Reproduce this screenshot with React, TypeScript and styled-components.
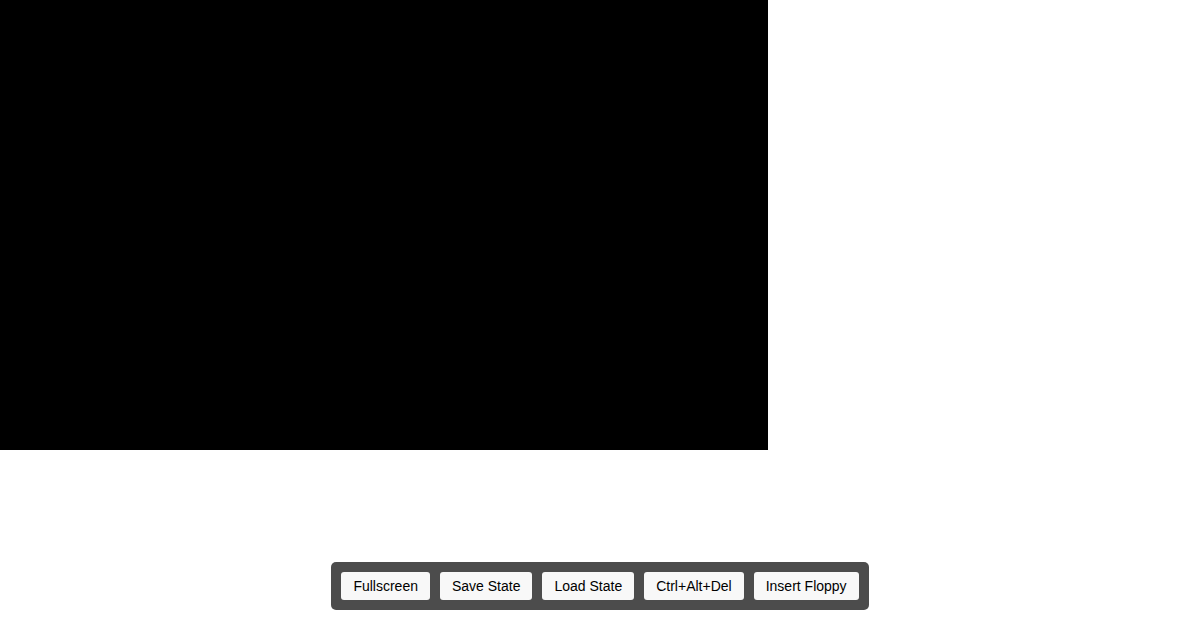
import React from "react";
import styled, { createGlobalStyle } from "styled-components";

const Global = createGlobalStyle`
  html, body { margin: 0; padding: 0; background: #ffffff; }
  body { font-family: "Liberation Sans", Arial, sans-serif; }
`;

const Page = styled.div`
  display: flex;
  flex-direction: column;
  height: 100vh;
  overflow: hidden;
`;

const Screen = styled.div`
  width: 768px;
  height: 450px;
  background: #000000;
  flex-shrink: 0;
`;

const Spacer = styled.div`
  flex: 1;
`;

const Toolbar = styled.div`
  align-self: center;
  display: flex;
  gap: 10px;
  padding: 10px;
  margin-bottom: 20px;
  background: rgba(0, 0, 0, 0.7);
  border-radius: 5px;
`;

const Button = styled.button`
  font-family: "Liberation Sans", Arial, sans-serif;
  font-size: 14px;
  line-height: 16px;
  color: #000;
  background: #f8f8f8;
  border: none;
  border-radius: 3px;
  padding: 6px 12px;
  cursor: pointer;
`;

const labels = ["Fullscreen", "Save State", "Load State", "Ctrl+Alt+Del", "Insert Floppy"];

export default function App() {
  return (
    <>
      <Global />
      <Page>
        <Screen />
        <Spacer />
        <Toolbar>
          {labels.map((l) => (
            <Button key={l}>{l}</Button>
          ))}
        </Toolbar>
      </Page>
    </>
  );
}
